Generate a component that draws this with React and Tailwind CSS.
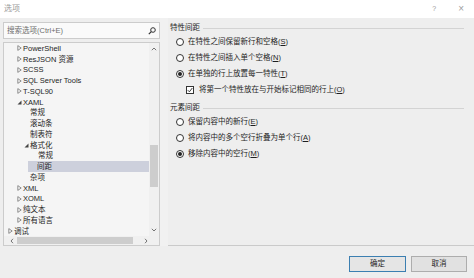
import React from 'react';

const treeItems = [
  { label: 'PowerShell', level: 1, arrow: 'closed' },
  { label: 'ResJSON 资源', level: 1, arrow: 'closed' },
  { label: 'SCSS', level: 1, arrow: 'closed' },
  { label: 'SQL Server Tools', level: 1, arrow: 'closed' },
  { label: 'T-SQL90', level: 1, arrow: 'closed' },
  { label: 'XAML', level: 1, arrow: 'open' },
  { label: '常规', level: 2 },
  { label: '滚动条', level: 2 },
  { label: '制表符', level: 2 },
  { label: '格式化', level: 2, arrow: 'open' },
  { label: '常规', level: 3 },
  { label: '间距', level: 3, selected: true },
  { label: '杂项', level: 2 },
  { label: 'XML', level: 1, arrow: 'closed' },
  { label: 'XOML', level: 1, arrow: 'closed' },
  { label: '纯文本', level: 1, arrow: 'closed' },
  { label: '所有语言', level: 1, arrow: 'closed' },
  { label: '调试', level: 0, arrow: 'closed' },
];

const indent = ['pl-[4px]', 'pl-[13px]', 'pl-[20px]', 'pl-[28px]'];

const Arrow = ({ type }) => {
  if (type === 'open') {
    return (
      <svg width="5" height="5" viewBox="0 0 5 5" className="shrink-0">
        <path d="M4.5 0.5 L4.5 4.5 L0.5 4.5 Z" fill="#444" />
      </svg>
    );
  }
  if (type === 'closed') {
    return (
      <svg width="5" height="6" viewBox="0 0 5 6" className="shrink-0">
        <path d="M0.8 0.6 L4.2 3 L0.8 5.4 Z" fill="none" stroke="#777" strokeWidth="0.8" />
      </svg>
    );
  }
  return <span className="w-[5px] shrink-0" />;
};

const Radio = ({ checked, children }) => (
  <div className="flex h-[16px] items-center pl-[6px]">
    <span className="flex h-[8px] w-[8px] items-center justify-center rounded-full border border-[#333] bg-white">
      {checked && <span className="h-[4px] w-[4px] rounded-full bg-[#222]" />}
    </span>
    <span className="ml-[4px]">{children}</span>
  </div>
);

const Header = ({ children }) => (
  <div className="flex h-[12px] items-center">
    <span className="text-[#1e1e1e]">{children}</span>
    <span className="ml-[3px] mr-[10px] h-px flex-1 bg-[#d3d3d3]" />
  </div>
);

const App = () => {
  return (
    <div className="flex h-[278px] w-[474px] flex-col overflow-hidden bg-[#eeeeee] font-['Liberation_Sans','Noto_Sans_CJK_SC',sans-serif] text-[7.5px] text-[#1e1e1e]">
      {/* title bar */}
      <div className="flex h-[18px] items-center bg-white pl-[4px] pr-[10px]">
        <span className="text-[8px] text-[#9a9a9a]">选项</span>
        <span className="ml-auto text-[7px] text-[#9a9a9a]">?</span>
        <span className="ml-[22px] text-[10px] leading-none text-[#a0a0a0]">×</span>
      </div>

      <div className="flex flex-1">
        {/* left side */}
        <div className="ml-[3px] flex w-[157px] flex-col">
          <div className="mt-[4px] flex h-[17px] items-center border border-[#cccccc] bg-[#fafafa] pl-[3px] pr-[3px]">
            <span className="text-[#6d6d6d]">搜索选项(Ctrl+E)</span>
            <svg width="8" height="8" viewBox="0 0 8 8" className="ml-auto">
              <circle cx="5" cy="3" r="2.3" fill="none" stroke="#333" strokeWidth="1" />
              <path d="M3.3 4.7 L0.8 7.2" stroke="#333" strokeWidth="1.2" />
            </svg>
          </div>

          <div className="mt-[3px] flex h-[204px] flex-col border border-[#cccccc] bg-[#f5f5f5]">
            <div className="flex flex-1 overflow-hidden">
              <div className="flex flex-1 flex-col">
                {treeItems.map((item, i) => (
                  <div key={i} className={`flex h-[10.75px] items-center ${indent[item.level]}`}>
                    {item.selected ? (
                      <div className="-ml-[4px] flex h-full flex-1 items-center bg-[#cdd0dc] pl-[9px]">
                        <span>{item.label}</span>
                      </div>
                    ) : (
                      <>
                        <Arrow type={item.arrow} />
                        <span className="ml-[1px]">{item.label}</span>
                      </>
                    )}
                  </div>
                ))}
              </div>
              {/* vertical scrollbar */}
              <div className="flex w-[10px] flex-col items-center bg-[#f0f0f0]">
                <svg width="6" height="4" viewBox="0 0 6 4" className="mt-[4px]">
                  <path d="M0.8 3.2 L3 1 L5.2 3.2" fill="none" stroke="#666" strokeWidth="0.9" />
                </svg>
                <div className="mt-[94px] h-[42px] w-[8px] bg-[#cdcdcd]" />
                <svg width="6" height="4" viewBox="0 0 6 4" className="mt-auto mb-[4px]">
                  <path d="M0.8 0.8 L3 3 L5.2 0.8" fill="none" stroke="#666" strokeWidth="0.9" />
                </svg>
              </div>
            </div>
            {/* horizontal scrollbar */}
            <div className="flex h-[9px] items-center bg-[#f0f0f0]">
              <svg width="4" height="6" viewBox="0 0 4 6" className="ml-[6px]">
                <path d="M3 0.8 L1 3 L3 5.2" fill="none" stroke="#666" strokeWidth="0.9" />
              </svg>
              <div className="ml-[3px] h-[7px] w-[116px] bg-[#cdcdcd]" />
              <svg width="4" height="6" viewBox="0 0 4 6" className="ml-[11px]">
                <path d="M1 0.8 L3 3 L1 5.2" fill="none" stroke="#666" strokeWidth="0.9" />
              </svg>
              <div className="ml-auto h-full w-[10px] bg-[#f0f0f0]" />
            </div>
          </div>
        </div>

        <div className="w-[8px] bg-[#f1f1f1]" />

        {/* right panel */}
        <div className="flex flex-1 flex-col border-b border-[#cacaca] pl-[2px] pt-[4px]">
          <Header>特性间距</Header>
          <Radio>在特性之间保留新行和空格(<u>S</u>)</Radio>
          <Radio>在特性之间插入单个空格(<u>N</u>)</Radio>
          <Radio checked>在单独的行上放置每一特性(<u>T</u>)</Radio>
          <div className="flex h-[16px] items-center pl-[16px]">
            <span className="flex h-[8px] w-[8px] items-center justify-center border border-[#333] bg-white">
              <svg width="6" height="6" viewBox="0 0 6 6">
                <path d="M0.8 3.2 L2.4 4.8 L5.3 1" fill="none" stroke="#222" strokeWidth="0.9" />
              </svg>
            </span>
            <span className="ml-[5px]">将第一个特性放在与开始标记相同的行上(<u>O</u>)</span>
          </div>
          <div className="mt-[4px]">
            <Header>元素间距</Header>
          </div>
          <Radio>保留内容中的新行(<u>E</u>)</Radio>
          <Radio>将内容中的多个空行折叠为单个行(<u>A</u>)</Radio>
          <Radio checked>移除内容中的空行(<u>M</u>)</Radio>
        </div>
      </div>

      {/* bottom buttons */}
      <div className="flex h-[32px] items-start justify-end pr-[7px] pt-[10px]">
        <button className="flex h-[16px] w-[57px] items-center justify-center border border-[#3c7fb1] bg-[#e5e5e5]">
          确定
        </button>
        <button className="ml-[5px] flex h-[16px] w-[56px] items-center justify-center border border-[#adadad] bg-[#e1e1e1]">
          取消
        </button>
      </div>
    </div>
  );
};

export default App;
